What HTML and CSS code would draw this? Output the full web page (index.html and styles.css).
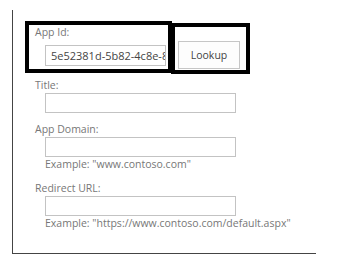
FILE: index.html
```html
<!DOCTYPE html>
<html>
<head>
<meta charset="utf-8">
<link rel="stylesheet" href="styles.css">
</head>
<body>
<div class="panel">
  <div class="top-row">
    <div class="mark mark-id">
      <div class="label label-id">App Id:</div>
      <div class="field field-id">5e52381d-5b82-4c8e-8a1f-3c2d7e9b6a40</div>
    </div>
    <div class="mark mark-btn">
      <div class="button">Lookup</div>
    </div>
  </div>
  <div class="group">
    <div class="label">Title:</div>
    <div class="field"></div>
  </div>
  <div class="group">
    <div class="label">App Domain:</div>
    <div class="field"></div>
    <div class="hint">Example: "www.contoso.com"</div>
  </div>
  <div class="group">
    <div class="label">Redirect URL:</div>
    <div class="field"></div>
    <div class="hint">Example: "https://www.contoso.com/default.aspx"</div>
  </div>
</div>
</body>
</html>
```
FILE: styles.css
```css
html, body {
  margin: 0;
  padding: 0;
  background: #ffffff;
}
body {
  font-family: "Open Sans", "Liberation Sans", sans-serif;
  font-size: 10.5px;
  color: #777777;
}
.panel {
  margin: 10px 0 0 12px;
  padding-top: 11px;
  width: 304px;
  height: 244px;
  border-left: 1px solid #444444;
  border-bottom: 1px solid #444444;
  box-sizing: border-box;
}
.top-row {
  display: flex;
  align-items: flex-start;
  margin: 0 0 0 12px;
}
.mark {
  border: 4px solid #000000;
  box-sizing: border-box;
}
.mark-id {
  width: 147px;
  height: 52px;
  padding: 0 0 0 6px;
}
.mark-btn {
  width: 79px;
  height: 51px;
  margin-top: 2px;
  margin-left: -1px;
  padding: 14px 0 0 3px;
}
.label {
  line-height: 16px;
  height: 16px;
  padding-left: 22px;
  white-space: nowrap;
}
.label-id {
  padding-left: 0;
  line-height: 13px;
  height: 13px;
  margin-top: 1px;
}
.field {
  width: 191px;
  height: 20px;
  margin-left: 32px;
  border: 1px solid #c3c3c3;
  box-sizing: border-box;
  background: #ffffff;
}
.field-id {
  width: 121px;
  height: 21px;
  margin: 6px 0 0 10px;
  padding: 0 0 0 5px;
  line-height: 19px;
  font-size: 11px;
  color: #444444;
  overflow: hidden;
  white-space: nowrap;
}
.button {
  width: 62px;
  height: 28px;
  border: 1px solid #c6c6c6;
  box-sizing: border-box;
  background: #fdfdfd;
  color: #444444;
  text-align: center;
  line-height: 26px;
}
.group {
  margin-bottom: 8px;
}
.top-row + .group {
  margin-top: 3px;
}
.hint {
  line-height: 15px;
  height: 15px;
  padding-left: 32px;
  white-space: nowrap;
}
```
